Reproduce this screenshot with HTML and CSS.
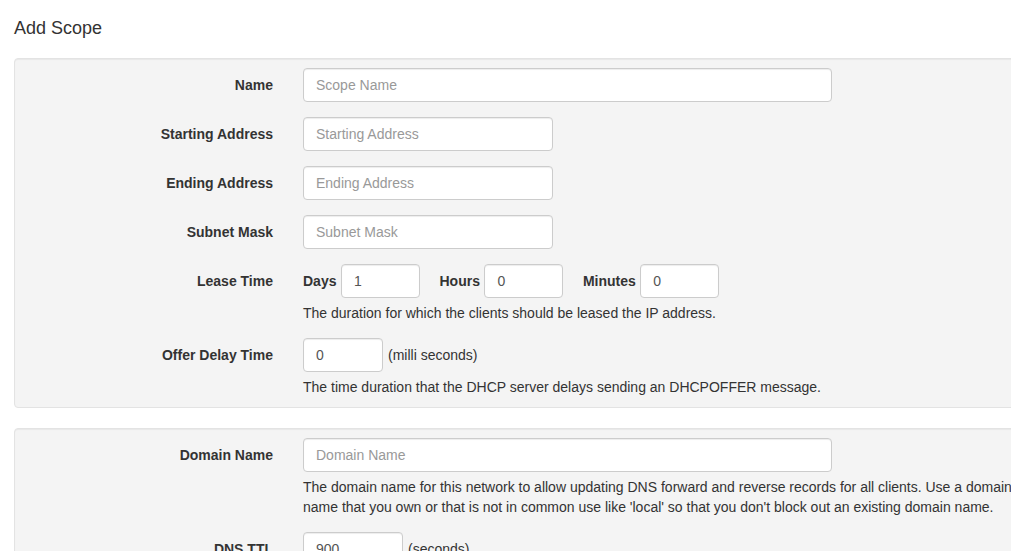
FILE: index.html
```html
<!DOCTYPE html>
<html>
<head>
<meta charset="utf-8">
<title>Add Scope</title>
<link rel="stylesheet" href="styles.css">
</head>
<body>
<div class="page">
  <h4 class="title">Add Scope</h4>

  <div class="well">
    <div class="form-group">
      <label class="control-label">Name</label>
      <div class="field">
        <input class="form-control w-wide" type="text" placeholder="Scope Name">
      </div>
    </div>
    <div class="form-group">
      <label class="control-label">Starting Address</label>
      <div class="field">
        <input class="form-control w-mid" type="text" placeholder="Starting Address">
      </div>
    </div>
    <div class="form-group">
      <label class="control-label">Ending Address</label>
      <div class="field">
        <input class="form-control w-mid" type="text" placeholder="Ending Address">
      </div>
    </div>
    <div class="form-group">
      <label class="control-label">Subnet Mask</label>
      <div class="field">
        <input class="form-control w-mid" type="text" placeholder="Subnet Mask">
      </div>
    </div>
    <div class="form-group">
      <label class="control-label">Lease Time</label>
      <div class="field">
        <div class="inline-row">
          <span class="inline-label">Days</span>
          <input class="form-control w-small" type="text" value="1">
          <span class="inline-label spaced">Hours</span>
          <input class="form-control w-small" type="text" value="0">
          <span class="inline-label spaced">Minutes</span>
          <input class="form-control w-small" type="text" value="0">
        </div>
        <div class="help-block">The duration for which the clients should be leased the IP address.</div>
      </div>
    </div>
    <div class="form-group">
      <label class="control-label">Offer Delay Time</label>
      <div class="field">
        <div class="inline-row">
          <input class="form-control w-offer" type="text" value="0">
          <span class="unit">(milli seconds)</span>
        </div>
        <div class="help-block">The time duration that the DHCP server delays sending an DHCPOFFER message.</div>
      </div>
    </div>
  </div>

  <div class="well">
    <div class="form-group">
      <label class="control-label">Domain Name</label>
      <div class="field">
        <input class="form-control w-wide" type="text" placeholder="Domain Name">
        <div class="help-block">The domain name for this network to allow updating DNS forward and reverse records for all clients. Use a domain name that you own or that is not in common use like 'local' so that you don't block out an existing domain name.</div>
      </div>
    </div>
    <div class="form-group">
      <label class="control-label">DNS TTL</label>
      <div class="field">
        <div class="inline-row">
          <input class="form-control w-ttl" type="text" value="900">
          <span class="unit">(seconds)</span>
        </div>
      </div>
    </div>
  </div>
</div>
</body>
</html>
```

FILE: styles.css
```css
html, body {
  overflow: hidden;
}

body {
  margin: 0;
  background: #ffffff;
  color: #333333;
  font-family: "Liberation Sans", Arial, Helvetica, sans-serif;
  font-size: 14px;
  line-height: 20px;
}

.page {
  padding: 18px 0 0 14px;
}

.title {
  margin: 0 0 20px 0;
  font-size: 18px;
  line-height: 20px;
  font-weight: normal;
  color: #333333;
}

.well {
  box-sizing: border-box;
  width: 1060px;
  margin: 0 0 20px 0;
  padding: 9px 0 10px 0;
  background: #f4f4f4;
  border: 1px solid #e3e3e3;
  border-radius: 4px;
  box-shadow: inset 0 1px 1px rgba(0, 0, 0, 0.05);
}

.form-group {
  display: flex;
  align-items: flex-start;
  margin-bottom: 15px;
}

.form-group:last-child {
  margin-bottom: 0;
}

.control-label {
  box-sizing: border-box;
  flex: 0 0 273px;
  padding: 7px 15px 0 0;
  text-align: right;
  font-weight: bold;
  line-height: 20px;
}

.field {
  width: 725px;
  margin-left: 15px;
}

.form-control {
  display: block;
  box-sizing: border-box;
  height: 34px;
  padding: 6px 12px;
  font-family: inherit;
  font-size: 14px;
  line-height: 20px;
  color: #555555;
  background: #ffffff;
  border: 1px solid #cccccc;
  border-radius: 4px;
  box-shadow: inset 0 1px 1px rgba(0, 0, 0, 0.075);
  outline: none;
}

.form-control::placeholder {
  color: #999999;
  opacity: 1;
}

.w-wide { width: 529px; }
.w-mid { width: 250px; }
.w-small { width: 79px; }
.w-offer { width: 80px; }
.w-ttl { width: 100px; }

.inline-row {
  display: flex;
  align-items: center;
}

.inline-label {
  font-weight: bold;
  margin-right: 4.5px;
}

.inline-label.spaced {
  margin-left: 19.5px;
}

.unit {
  margin-left: 5px;
}

.help-block {
  margin-top: 5px;
  color: #333333;
  line-height: 20px;
}
```
